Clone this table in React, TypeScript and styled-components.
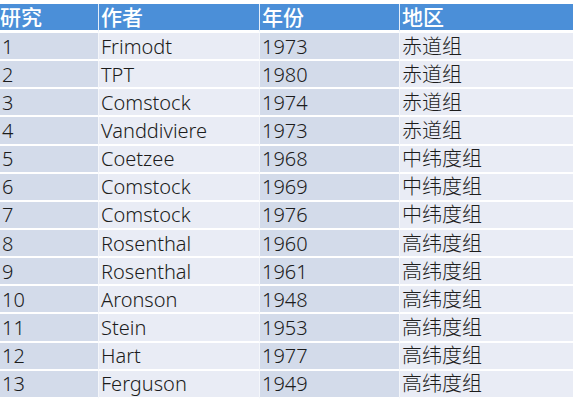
import { createGlobalStyle } from 'styled-components'
import styled from 'styled-components'

const rows: [string, string, string, string][] = [
  ['1', 'Frimodt', '1973', '赤道组'],
  ['2', 'TPT', '1980', '赤道组'],
  ['3', 'Comstock', '1974', '赤道组'],
  ['4', 'Vanddiviere', '1973', '赤道组'],
  ['5', 'Coetzee', '1968', '中纬度组'],
  ['6', 'Comstock', '1969', '中纬度组'],
  ['7', 'Comstock', '1976', '中纬度组'],
  ['8', 'Rosenthal', '1960', '高纬度组'],
  ['9', 'Rosenthal', '1961', '高纬度组'],
  ['10', 'Aronson', '1948', '高纬度组'],
  ['11', 'Stein', '1953', '高纬度组'],
  ['12', 'Hart', '1977', '高纬度组'],
  ['13', 'Ferguson', '1949', '高纬度组'],
]

const headers = ['研究', '作者', '年份', '地区']

const GlobalStyle = createGlobalStyle`
  html, body {
    margin: 0;
    padding: 0;
    background: #ffffff;
  }
  body {
    font-family: "Noto Sans", "Noto Sans CJK SC", sans-serif;
  }
`

const Page = styled.div`
  width: 579px;
  height: 413px;
  padding-top: 4px;
  box-sizing: border-box;
  background: #ffffff;
`

const Table = styled.div`
  display: grid;
  width: 573px;
  grid-template-columns: 98px 161px 140px 174px;
  grid-template-rows: 29px repeat(13, 28.15px);
`

const HeadCell = styled.div<{ $first?: boolean }>`
  background: #4b8fd8;
  color: #ffffff;
  font-size: 21px;
  font-weight: 500;
  display: flex;
  align-items: center;
  padding-left: ${(p) => (p.$first ? '0' : '2px')};
  border-left: ${(p) => (p.$first ? 'none' : '1px solid #e4eefa')};
  border-bottom: 3px solid #ffffff;
  box-sizing: border-box;
  line-height: 1;
`

const Cell = styled.div<{ $dark: boolean; $first?: boolean }>`
  background: ${(p) => (p.$dark ? '#d3dbea' : '#e9ecf5')};
  color: #1c1c1c;
  font-size: 20px;
  font-weight: 300;
  display: flex;
  align-items: center;
  padding-left: 2px;
  padding-top: 1px;
  border-left: ${(p) => (p.$first ? 'none' : '1px solid #f4f6fa')};
  border-bottom: 2px solid #ffffff;
  box-sizing: border-box;
  line-height: 1;
  white-space: nowrap;
`

export default function App() {
  return (
    <>
      <GlobalStyle />
      <Page>
        <Table>
          {headers.map((h, i) => (
            <HeadCell key={h} $first={i === 0}>
              {h}
            </HeadCell>
          ))}
          {rows.map((r) =>
            r.map((v, i) => (
              <Cell key={`${r[0]}-${i}`} $dark={i % 2 === 0} $first={i === 0}>
                {v}
              </Cell>
            )),
          )}
        </Table>
      </Page>
    </>
  )
}
